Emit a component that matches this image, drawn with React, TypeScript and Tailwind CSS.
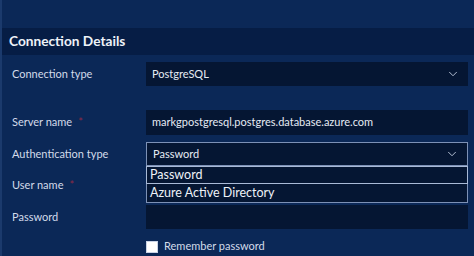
import { ChevronDown } from 'lucide-react'

const FONT = { fontFamily: 'Lato, "Noto Sans", sans-serif' }

function FieldLabel({ text, required }: { text: string; required?: boolean }) {
  return (
    <div className="w-[144px] shrink-0 pl-[10px] text-[11px] text-[#d3dbea]">
      {text}
      {required && <span className="ml-[6px] text-[#8c2a45]">*</span>}
    </div>
  )
}

function Chevron() {
  return <ChevronDown className="absolute right-[8px] top-1/2 -translate-y-1/2 text-[#c9d3e6]" size={14} strokeWidth={1.5} />
}

export default function App() {
  return (
    <div
      className="w-[474px] h-[256px] overflow-hidden bg-[#0b2857] border-l-2 border-[#1b3a6c] text-white"
      style={FONT}
    >
      <div className="h-[28px]" />
      <div className="h-[27px] bg-[#061d45] flex items-center pl-[7px] text-[13.7px] font-bold text-[#eef2f8]">
        Connection Details
      </div>

      <div className="flex flex-col pr-[6px]">
        <div className="mt-[7px] flex items-center h-[24px]">
          <FieldLabel text="Connection type" />
          <div className="relative flex-1 h-full bg-[#051633] flex items-center pl-[6px] text-[11px] text-[#e6ebf4]">
            PostgreSQL
            <Chevron />
          </div>
        </div>

        <div className="mt-[24px] flex items-center h-[25px]">
          <FieldLabel text="Server name" required />
          <div className="flex-1 h-full bg-[#051633] flex items-center pl-[6px] text-[11px] text-[#e6ebf4]">
            markgpostgresql.postgres.database.azure.com
          </div>
        </div>

        <div className="mt-[7px] flex items-center h-[24px]">
          <FieldLabel text="Authentication type" />
          <div className="relative flex-1 h-full bg-[#051633] border border-[#7d91b6] flex items-center pl-[6px] text-[11px] text-[#e6ebf4]">
            Password
            <Chevron />
            <div className="absolute left-[-1px] right-[-1px] top-full mt-[1px] bg-[#051633] text-[12.5px] text-[#eef2f8]">
              <div className="h-[18px] border border-[#a9bad7] flex items-center pl-[3px] leading-none">Password</div>
              <div className="h-[19px] border border-t-0 border-[#7d91b6] flex items-center pl-[3px] leading-none">
                Azure Active Directory
              </div>
            </div>
          </div>
        </div>

        <div className="mt-[7px] flex items-center h-[24px]">
          <FieldLabel text="User name" required />
          <div className="flex-1 h-full bg-[#051633]" />
        </div>

        <div className="mt-[8px] flex items-center h-[24px]">
          <FieldLabel text="Password" />
          <div className="flex-1 h-full bg-[#051633]" />
        </div>

        <div className="mt-[11px] flex items-center h-[13px]">
          <div className="w-[144px] shrink-0" />
          <div className="w-[12px] h-[12px] bg-white border border-[#c9d3e6]" />
          <span className="ml-[6px] text-[11px] text-[#d3dbea]">Remember password</span>
        </div>
      </div>
    </div>
  )
}
